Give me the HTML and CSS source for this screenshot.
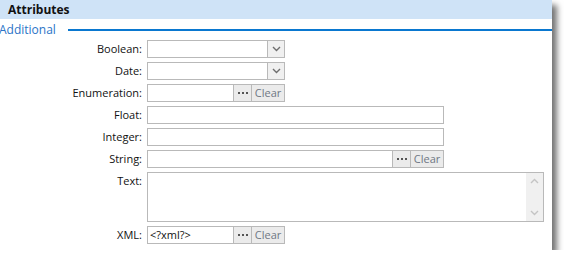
FILE: index.html
```html
<!DOCTYPE html>
<html lang="en">
<head>
    <meta charset="UTF-8">
    <title>Attributes</title>
    <link rel="stylesheet" href="styles.css">
</head>
<body>
    <div class="panel">
        <div class="panel-header">Attributes</div>

        <div class="group-title">
            <span>Additional</span>
            <div class="group-line"></div>
        </div>

        <div class="form">
            <label class="label">Boolean:</label>
            <div class="field w-short">
                <div class="value"></div>
                <div class="btn drop"><svg width="9" height="6" viewBox="0 0 9 6"><path d="M1 1l3.5 3.5L8 1" fill="none" stroke="#6e6e6e" stroke-width="1.4"/></svg></div>
            </div>

            <label class="label">Date:</label>
            <div class="field w-short">
                <div class="value"></div>
                <div class="btn drop"><svg width="9" height="6" viewBox="0 0 9 6"><path d="M1 1l3.5 3.5L8 1" fill="none" stroke="#6e6e6e" stroke-width="1.4"/></svg></div>
            </div>

            <label class="label">Enumeration:</label>
            <div class="field w-short">
                <div class="value"></div>
                <div class="btn dots"><svg width="10" height="2" viewBox="0 0 10 2"><rect x="0" width="2" height="2" fill="#555"/><rect x="4" width="2" height="2" fill="#555"/><rect x="8" width="2" height="2" fill="#555"/></svg></div>
                <div class="btn clear">Clear</div>
            </div>

            <label class="label">Float:</label>
            <div class="field w-long"><div class="value"></div></div>

            <label class="label">Integer:</label>
            <div class="field w-long"><div class="value"></div></div>

            <label class="label">String:</label>
            <div class="field w-long">
                <div class="value"></div>
                <div class="btn dots"><svg width="10" height="2" viewBox="0 0 10 2"><rect x="0" width="2" height="2" fill="#555"/><rect x="4" width="2" height="2" fill="#555"/><rect x="8" width="2" height="2" fill="#555"/></svg></div>
                <div class="btn clear">Clear</div>
            </div>

            <label class="label">Text:</label>
            <div class="field textarea">
                <div class="value"></div>
                <div class="scroll">
                    <svg width="9" height="6" viewBox="0 0 9 6"><path d="M1 5l3.5-3.5L8 5" fill="none" stroke="#c4c4c4" stroke-width="1.4"/></svg>
                    <svg width="9" height="6" viewBox="0 0 9 6"><path d="M1 1l3.5 3.5L8 1" fill="none" stroke="#c4c4c4" stroke-width="1.4"/></svg>
                </div>
            </div>

            <label class="label">XML:</label>
            <div class="field w-short">
                <div class="value">&lt;?xml?&gt;</div>
                <div class="btn dots"><svg width="10" height="2" viewBox="0 0 10 2"><rect x="0" width="2" height="2" fill="#555"/><rect x="4" width="2" height="2" fill="#555"/><rect x="8" width="2" height="2" fill="#555"/></svg></div>
                <div class="btn clear">Clear</div>
            </div>
        </div>
    </div>
</body>
</html>
```

FILE: styles.css
```css
body {
    margin: 0;
    padding: 0;
    background-color: #ffffff;
    font-family: 'Open Sans', sans-serif;
    font-size: 11px;
    color: #1a1a1a;
}

.panel {
    width: 552px;
    height: 250px;
    background: #ffffff;
    box-shadow: 5px 5px 6px rgba(0,0,0,0.55);
    overflow: hidden;
}

.panel-header {
    height: 19px;
    line-height: 19px;
    padding-left: 8px;
    background-color: #cfe3f7;
    font-weight: bold;
    font-size: 12px;
    color: #111111;
}

.group-title {
    display: flex;
    align-items: center;
    height: 21px;
    margin-left: -1px;
    color: #2b74c7;
    font-size: 12px;
}

.group-line {
    flex: 1;
    height: 2px;
    margin-left: 12px;
    background-color: #0a78d0;
}

.form {
    display: grid;
    grid-template-columns: 143px auto;
    column-gap: 4px;
    row-gap: 4px;
}

.label {
    text-align: right;
    line-height: 18px;
    padding-right: 1px;
    color: #111111;
}

.field {
    display: flex;
    height: 18px;
    box-sizing: border-box;
    border: 1px solid #b9b9b9;
    background: #ffffff;
}

.w-short {
    width: 138px;
}

.w-long {
    width: 297px;
}

.textarea {
    width: 397px;
    height: 50px;
}

.value {
    flex: 1;
    line-height: 16px;
    padding-left: 2px;
    color: #111111;
}

.btn {
    display: flex;
    align-items: center;
    justify-content: center;
    background-color: #ebebeb;
    border-left: 1px solid #b9b9b9;
    color: #6f7784;
}

.drop {
    width: 16px;
    background-color: #f0f0f0;
}

.dots {
    width: 17px;
}

.clear {
    width: 32px;
    line-height: 16px;
}

.scroll {
    width: 17px;
    background-color: #f0f0f0;
    display: flex;
    flex-direction: column;
    justify-content: space-between;
    align-items: center;
    padding: 5px 0;
    box-sizing: border-box;
}
```
